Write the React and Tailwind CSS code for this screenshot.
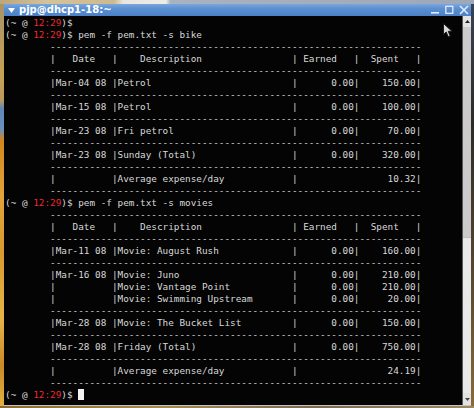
import React from "react";

const IND = "        ";
const DASH = IND + "-".repeat(66);
const HDR =
  IND + "|" + "   Date   " + "|" + "    Description".padEnd(31) + "|" + " Earned   " + "|" + "  Spent   " + "|";
const row = (d, desc, e, s) =>
  IND + "|" + d.padEnd(10) + "|" + desc.padEnd(31) + "|" + e.padStart(10) + "|" + s.padStart(10) + "|";
const avg = (v) =>
  IND + "|" + " ".repeat(10) + "|" + "Average expense/day".padEnd(31) + "|" + v.padStart(21) + "|";

const lines = [
  { prompt: true, cmd: "" },
  { prompt: true, cmd: " pem -f pem.txt -s bike" },
  DASH,
  HDR,
  DASH,
  row("Mar-04 08", "Petrol", "0.00", "150.00"),
  DASH,
  row("Mar-15 08", "Petrol", "0.00", "100.00"),
  DASH,
  row("Mar-23 08", "Fri petrol", "0.00", "70.00"),
  DASH,
  row("Mar-23 08", "Sunday (Total)", "0.00", "320.00"),
  DASH,
  avg("10.32"),
  DASH,
  { prompt: true, cmd: " pem -f pem.txt -s movies" },
  DASH,
  HDR,
  DASH,
  row("Mar-11 08", "Movie: August Rush", "0.00", "160.00"),
  DASH,
  row("Mar-16 08", "Movie: Juno", "0.00", "210.00"),
  row("", "Movie: Vantage Point", "0.00", "210.00"),
  row("", "Movie: Swimming Upstream", "0.00", "20.00"),
  DASH,
  row("Mar-28 08", "Movie: The Bucket List", "0.00", "150.00"),
  DASH,
  row("Mar-28 08", "Friday (Total)", "0.00", "750.00"),
  DASH,
  avg("24.19"),
  DASH,
  { prompt: true, cmd: " ", cursor: true },
];

function Line({ l }) {
  if (typeof l === "string") {
    return <div className="h-[12px] whitespace-pre">{l}</div>;
  }
  return (
    <div className="h-[12px] whitespace-pre">
      <span>(~ @ </span>
      <span className="text-[#f0282c]">12:29</span>
      <span>)$</span>
      <span>{l.cmd}</span>
      {l.cursor && <span className="inline-block align-[-2px] w-[6px] h-[11px] bg-[#f2f2f2]" />}
    </div>
  );
}

export default function App() {
  return (
    <div className="w-[474px] h-[408px] overflow-hidden flex flex-col bg-[#b88a40] relative">
      {/* desktop top strip */}
      <div className="h-[4px] shrink-0 bg-[linear-gradient(90deg,#bca67c_0%,#d4c29a_10%,#cdb98e_24%,#e8e6de_26%,#eeece6_35%,#a9b2c0_36%,#9ea8b8_100%)]" />
      <div className="flex flex-1 min-h-0">
        {/* desktop left strip */}
        <div className="w-[4px] shrink-0 bg-[linear-gradient(180deg,#a89468_0%,#c8a254_18%,#b89a60_24%,#5e86b8_26%,#6a90bc_31%,#d2861e_34%,#e2a43a_48%,#d89a30_62%,#e7b448_78%,#c98a26_90%,#e2b040_100%)]" />
        {/* window */}
        <div className="flex-1 flex flex-col min-w-0">
          {/* title bar */}
          <div className="h-[12px] shrink-0 flex items-center bg-[linear-gradient(180deg,#79a6dd_0%,#5b8fd2_40%,#4b80c7_100%)] text-white font-['DejaVu_Sans',sans-serif] font-bold text-[10px] leading-[12px]">
            <svg width="7" height="5" viewBox="0 0 7 5" className="ml-[4px] mr-[4px]">
              <path d="M0 0 L7 0 L3.5 5 Z" fill="#ffffff" />
            </svg>
            <span>pjp@dhcp1-18:~</span>
            <div className="flex-1" />
            <svg width="9" height="10" viewBox="0 0 9 10" className="mr-[5px]">
              <rect x="0" y="7" width="8" height="1.6" fill="#e3ecf8" />
            </svg>
            <svg width="9" height="10" viewBox="0 0 9 10" className="mr-[5px]">
              <rect x="0.8" y="1.3" width="7" height="7" fill="none" stroke="#e3ecf8" strokeWidth="1.3" />
            </svg>
            <svg width="10" height="10" viewBox="0 0 10 10" className="mr-[2px]">
              <path d="M1 1 L9 9 M9 1 L1 9" stroke="#e3ecf8" strokeWidth="1.6" />
            </svg>
          </div>
          {/* body */}
          <div className="flex flex-1 min-h-0">
            <div className="flex-1 bg-[#040404] pt-[1px] pl-[1px] text-[#d8d8d8] font-['DejaVu_Sans_Mono',monospace] text-[9.35px] leading-[12px] overflow-hidden">
              {lines.map((l, i) => (
                <Line key={i} l={l} />
              ))}
            </div>
            {/* scrollbar */}
            <div className="w-[9px] shrink-0 flex flex-col border-l border-[#5a5a5a] bg-[#cfcfcf]">
              <div className="h-[11px] shrink-0 flex items-center justify-center bg-[#e2e2e2]">
                <svg width="5" height="3" viewBox="0 0 5 3">
                  <path d="M0 3 L5 3 L2.5 0 Z" fill="#222" />
                </svg>
              </div>
              <div className="h-[210px] shrink-0 bg-[#cbcbcb]" />
              <div className="flex-1 bg-[#e9e9e9] border-t border-[#bdbdbd]" />
              <div className="h-[12px] shrink-0 flex items-center justify-center bg-[#e2e2e2]">
                <svg width="5" height="3" viewBox="0 0 5 3">
                  <path d="M0 0 L5 0 L2.5 3 Z" fill="#444" />
                </svg>
              </div>
            </div>
          </div>
          <div className="h-[1px] shrink-0 bg-[#c4c4c4]" />
        </div>
        {/* desktop right strip */}
        <div className="w-[3px] shrink-0 bg-[linear-gradient(180deg,#3a4250_0%,#2c2a28_30%,#5a4a30_70%,#8a6a38_100%)]" />
      </div>
      <div className="h-[2px] shrink-0 bg-[linear-gradient(90deg,#8a6a30,#a88850,#7a6a50,#9a8a60)]" />
      {/* mouse pointer */}
      <svg
        width="11"
        height="15"
        viewBox="0 0 11 15"
        className="absolute left-[443px] top-[23px]"
      >
        <path
          d="M0.5 0.5 L0.5 11.5 L3.2 9 L5.2 13.8 L7.2 13 L5.3 8.3 L9 8.3 Z"
          fill="#d8d8d8"
          stroke="#1a1a1a"
          strokeWidth="1"
        />
      </svg>
    </div>
  );
}
